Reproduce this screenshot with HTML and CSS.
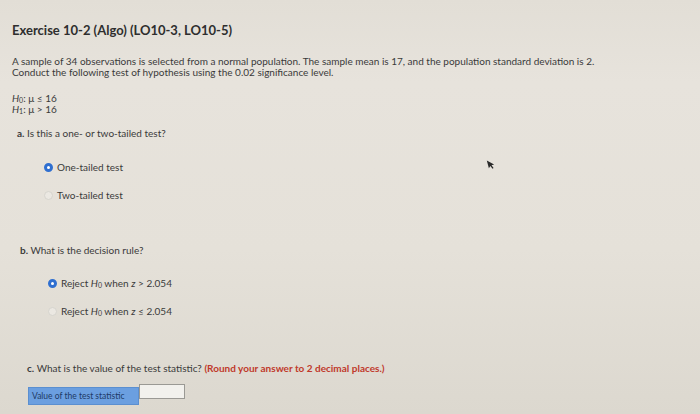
FILE: index.html
```html
<!DOCTYPE html>
<html>
<head>
<meta charset="utf-8">
<link rel="stylesheet" href="styles.css">
</head>
<body>
<div class="page">
  <h1 class="title">Exercise 10-2 (Algo) (LO10-3, LO10-5)</h1>
  <p class="intro">A sample of 34 observations is selected from a normal population. The sample mean is 17, and the population standard deviation is 2.<br>Conduct the following test of hypothesis using the 0.02 significance level.</p>
  <div class="hyp">
    <div><i>H</i><sub>0</sub>: μ ≤ 16</div>
    <div><i>H</i><sub>1</sub>: μ &gt; 16</div>
  </div>
  <div class="question qa"><b>a.</b> Is this a one- or two-tailed test?</div>
  <div class="options opts-a">
    <div class="opt"><span class="radio on"></span><span>One-tailed test</span></div>
    <div class="opt"><span class="radio"></span><span>Two-tailed test</span></div>
  </div>
  <div class="question qb"><b>b.</b> What is the decision rule?</div>
  <div class="options opts-b">
    <div class="opt"><span class="radio on"></span><span>Reject <i>H</i><sub>0</sub> when <i>z</i> &gt; 2.054</span></div>
    <div class="opt"><span class="radio"></span><span>Reject <i>H</i><sub>0</sub> when <i>z</i> ≤ 2.054</span></div>
  </div>
  <div class="question qc"><b>c.</b> What is the value of the test statistic? <span class="note">(Round your answer to 2 decimal places.)</span></div>
  <div class="answer">
    <span class="label">Value of the test statistic</span><span class="input"></span>
  </div>
</div>
<svg class="cursor" width="8" height="11" viewBox="0 0 8 11"><path d="M1 0.5 L1 8.5 L3 6.8 L4.4 10 L5.6 9.5 L4.3 6.4 L7 6.3 Z" fill="#2a2a2a"/></svg>
</body>
</html>
```
FILE: styles.css
```css
html, body {
  margin: 0;
  padding: 0;
}
body {
  width: 700px;
  height: 414px;
  overflow: hidden;
  background: linear-gradient(180deg, #e2ded6 0%, #e7e3dc 20%, #e5e1d9 60%, #dcd8cf 100%);
  font-family: Lato, "Open Sans", sans-serif;
  color: #3a3a3a;
  position: relative;
}
.page {
  padding: 22px 0 0 12px;
}
.title {
  margin: 0;
  font-size: 13px;
  line-height: 16px;
  font-weight: 700;
  color: #2e2e2e;
}
.intro {
  margin: 18px 0 0 0;
  font-size: 10px;
  line-height: 10.5px;
  color: #3a3a3a;
}
.hyp {
  margin-top: 15.5px;
  font-size: 10px;
  line-height: 11px;
  color: #3a3a3a;
}
sub {
  font-size: 7px;
  line-height: 0;
  vertical-align: -1px;
}
.question {
  font-size: 10px;
  line-height: 11px;
}
.question b { font-weight: 700; }
.qa { margin: 13px 0 0 5px; }
.qb { margin: 44px 0 0 8px; }
.qc { margin: 46px 0 0 15px; }
.note { color: #c0392b; font-weight: 700; }
.options {
  display: flex;
  flex-direction: column;
  gap: 17px;
  font-size: 10px;
  line-height: 11px;
}
.opts-a { margin: 23px 0 0 32px; }
.opts-b { margin: 22px 0 0 36px; }
.opt {
  display: flex;
  align-items: center;
  gap: 4px;
}
.radio {
  width: 9px;
  height: 9px;
  border-radius: 50%;
  border: 1px solid #d6d4ce;
  box-sizing: border-box;
  background: #ebe8e2;
}
.radio.on {
  border: 3px solid #2f6fd0;
  background: #fff;
}
.answer {
  margin: 13px 0 0 16px;
  display: flex;
  align-items: flex-start;
}
.label {
  background: #6b9fe0;
  color: #1e3a66;
  font-size: 8.5px;
  line-height: 16px;
  padding: 0 3px;
  width: 103px;
  height: 16px;
  border: 1px solid #5b8fd0;
}
.input {
  width: 44px;
  height: 13px;
  margin-top: -3px;
  background: #f2f1ed;
  border: 1px solid #9a9994;
}
.cursor {
  position: absolute;
  left: 487px;
  top: 159px;
  transform: rotate(-15deg);
}
```
